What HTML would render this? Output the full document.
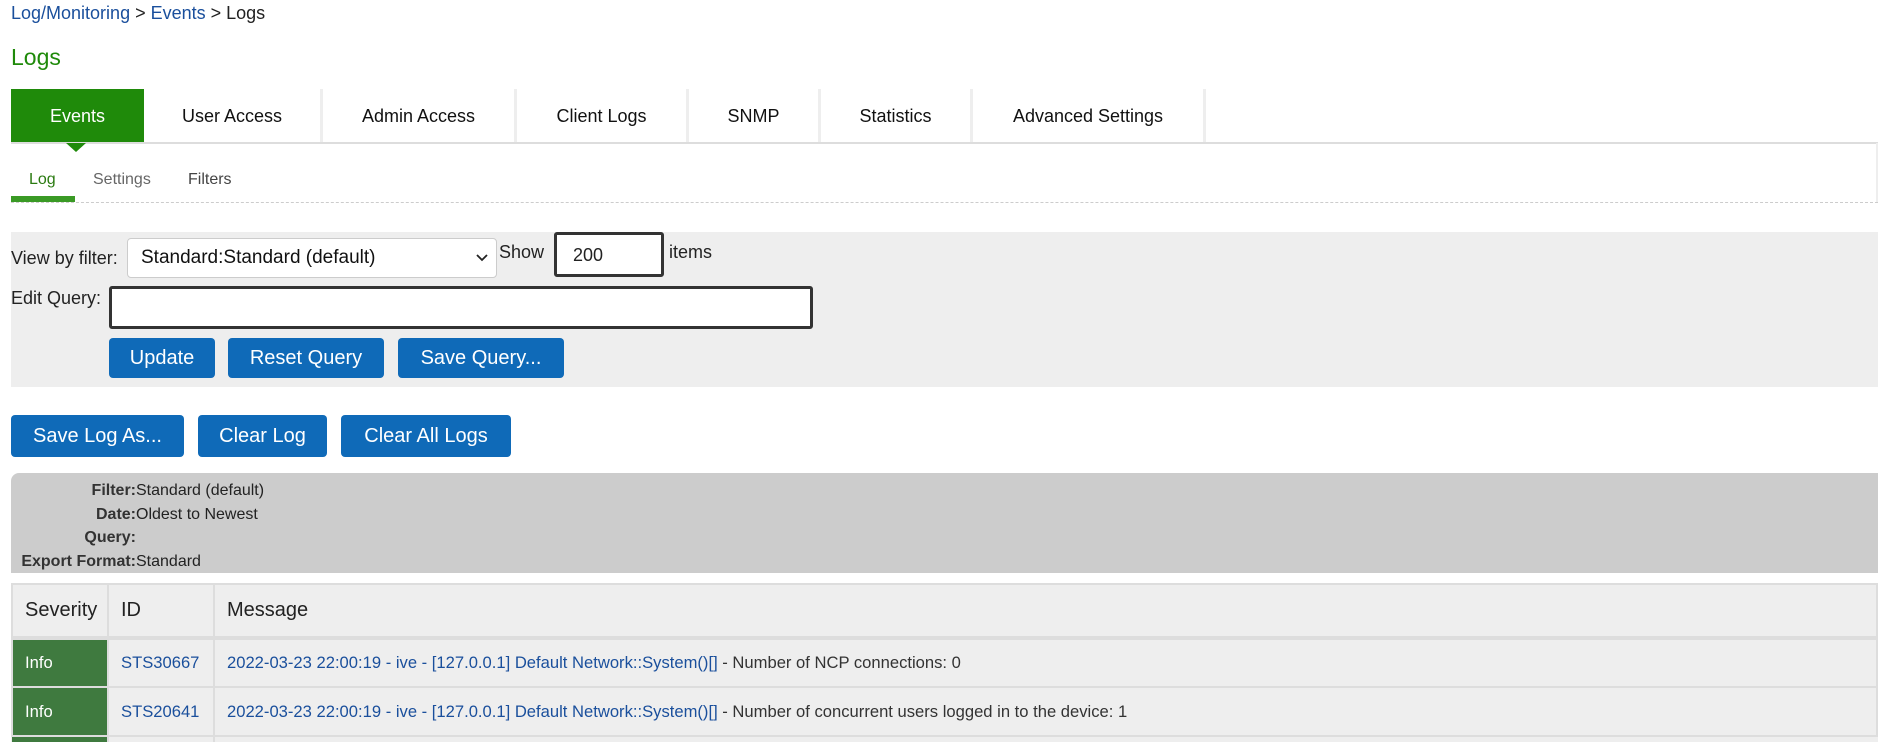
<!DOCTYPE html>
<html><head><meta charset="utf-8"><style>
*{box-sizing:border-box;margin:0;padding:0}
html{height:742px;overflow:hidden}
body{width:1891px;height:742px;overflow:hidden;background:#fff;font-family:"Liberation Sans",Arial,sans-serif;color:#222;position:relative}
.a{position:absolute}
.bc{left:11px;top:3px;font-size:18px;color:#222}
.bc span{color:#1a4f9c}
.title{left:11px;top:44px;font-size:23px;color:#1f8a0a}
.tabs{left:11px;top:89px;width:1867px;height:55px;border-bottom:2px solid #ddd}
.tab{position:absolute;top:0;height:53px;line-height:55px;text-align:center;font-size:18px;color:#111;border-right:3px solid #eee}
.tab.on{background:#1f8a0a;color:#fff;border:none}
.arrow{left:66px;top:143px;width:0;height:0;border-left:10px solid transparent;border-right:10px solid transparent;border-top:9px solid #1f8a0a}
.vr{left:1876px;top:143px;width:2px;height:60px;background:#eee}
.sub{top:171px;font-size:16px;color:#666}
.uline{left:11px;top:196px;width:64px;height:6px;background:#3a9a25}
.dash{left:11px;top:202px;width:1867px;border-top:1px dashed #ccc}
.panel{left:11px;top:232px;width:1867px;height:155px;background:#eee}
.lbl{font-size:18px;color:#222}
.sel{left:127px;top:238px;width:370px;height:40px;background:#fff;border:1px solid #ccc;border-radius:4px;font-size:19px;line-height:38px;padding-left:13px;color:#111}
.inp{background:#fff;border:3px solid #333;border-radius:3px}
.btn{position:absolute;background:#0f6ab8;color:#fff;border-radius:4px;font-size:20px;text-align:center}
.info{left:11px;top:473px;width:1867px;height:100px;background:#ccc;border-top-left-radius:8px;font-size:16px}
.info div{position:absolute;left:0;width:100%}
.info b{display:inline-block;width:125px;text-align:right;font-weight:bold;color:#333}
table{position:absolute;left:11px;top:583px;width:1867px;border-collapse:collapse;font-size:16.6px}
td,th{border:2px solid #ddd;background:#eee;text-align:left;font-weight:normal;padding-left:12px}
th{height:54px;font-size:20px;color:#222;border-bottom:4px solid #ddd}
td{height:49px;color:#1a4f9c}
td.sv{background:#3f7a3f;color:#fff;border-color:#ddd}
td span{color:#333}
</style></head><body>
<div class="a bc"><span>Log/Monitoring</span> &gt; <span>Events</span> &gt; Logs</div>
<div class="a title">Logs</div>
<div class="a tabs">
<div class="tab on" style="left:0;width:133px">Events</div>
<div class="tab" style="left:133px;width:179px">User Access</div>
<div class="tab" style="left:312px;width:194px">Admin Access</div>
<div class="tab" style="left:506px;width:172px">Client Logs</div>
<div class="tab" style="left:678px;width:132px">SNMP</div>
<div class="tab" style="left:810px;width:152px">Statistics</div>
<div class="tab" style="left:962px;width:233px">Advanced Settings</div>
</div>
<div class="a arrow"></div>
<div class="a vr"></div>
<div class="a sub" style="left:29px;color:#2a7a10">Log</div>
<div class="a sub" style="left:93px">Settings</div>
<div class="a sub" style="left:188px;color:#444">Filters</div>
<div class="a uline"></div>
<div class="a dash"></div>
<div class="a panel"></div>
<div class="a lbl" style="left:11px;top:248px">View by filter:</div>
<div class="a sel">Standard:Standard (default)<svg style="position:absolute;right:8px;top:15px" width="12" height="8" viewBox="0 0 12 8"><path d="M1 1l5 5 5-5" fill="none" stroke="#222" stroke-width="1.8"/></svg></div>
<div class="a lbl" style="left:499px;top:242px">Show</div>
<div class="a inp" style="left:554px;top:232px;width:110px;height:45px;font-size:18px;padding:10px 0 0 16px">200</div>
<div class="a lbl" style="left:669px;top:242px">items</div>
<div class="a lbl" style="left:11px;top:288px">Edit Query:</div>
<div class="a inp" style="left:109px;top:286px;width:704px;height:43px"></div>
<div class="btn" style="left:109px;top:338px;width:106px;height:40px;line-height:40px">Update</div>
<div class="btn" style="left:228px;top:338px;width:156px;height:40px;line-height:40px">Reset Query</div>
<div class="btn" style="left:398px;top:338px;width:166px;height:40px;line-height:40px">Save Query...</div>
<div class="btn" style="left:11px;top:415px;width:173px;height:42px;line-height:42px">Save Log As...</div>
<div class="btn" style="left:198px;top:415px;width:129px;height:42px;line-height:42px">Clear Log</div>
<div class="btn" style="left:341px;top:415px;width:170px;height:42px;line-height:42px">Clear All Logs</div>
<div class="a info">
<div style="top:9px"><b>Filter:</b>Standard (default)</div>
<div style="top:33px"><b>Date:</b>Oldest to Newest</div>
<div style="top:56px"><b>Query:</b></div>
<div style="top:80px"><b style="width:125px">Export Format:</b>Standard</div>
</div>
<table>
<tr><th style="width:96px">Severity</th><th style="width:106px">ID</th><th>Message</th></tr>
<tr><td class="sv">Info</td><td>STS30667</td><td>2022-03-23 22:00:19 - ive - [127.0.0.1] Default Network::System()[] <span>- Number of NCP connections: 0</span></td></tr>
<tr><td class="sv">Info</td><td>STS20641</td><td>2022-03-23 22:00:19 - ive - [127.0.0.1] Default Network::System()[] <span>- Number of concurrent users logged in to the device: 1</span></td></tr>
</table>
<div class="a" style="left:11px;top:737px;width:1867px;height:5px;background:#eee"></div>
<div class="a" style="left:12px;top:737px;width:95px;height:5px;background:#3f7a3f"></div>
<div class="a" style="left:107px;top:737px;width:2px;height:5px;background:#ddd"></div>
<div class="a" style="left:213px;top:737px;width:2px;height:5px;background:#ddd"></div>
</body></html>
